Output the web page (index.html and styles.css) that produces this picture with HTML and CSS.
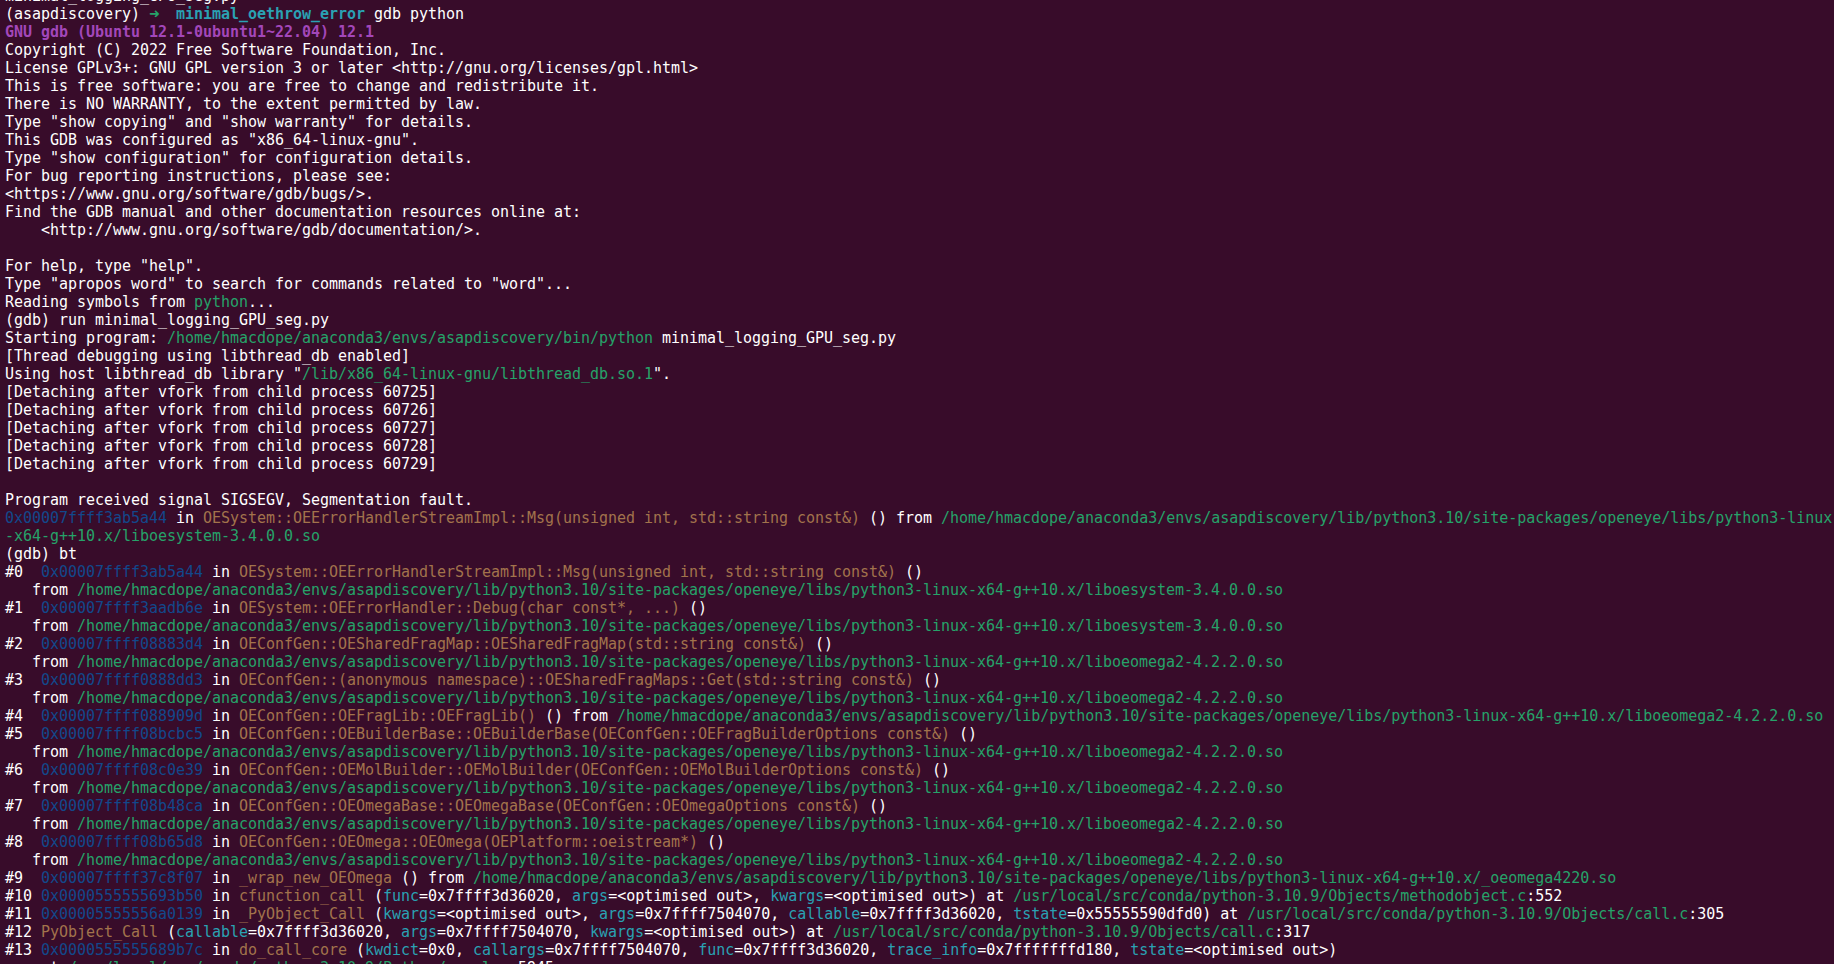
FILE: index.html
```html
<!DOCTYPE html>
<html>
<head>
<meta charset="utf-8">
<link rel="stylesheet" href="styles.css">
</head>
<body>
<pre class="term">minimal_logging_GPU_seg.py
(asapdiscovery) <span class="g bd arrow">➜</span>  <span class="c bd">minimal_oethrow_error</span> gdb python
<span class="m bd">GNU gdb (Ubuntu 12.1-0ubuntu1~22.04) 12.1</span>
Copyright (C) 2022 Free Software Foundation, Inc.
License GPLv3+: GNU GPL version 3 or later &lt;http://gnu.org/licenses/gpl.html&gt;
This is free software: you are free to change and redistribute it.
There is NO WARRANTY, to the extent permitted by law.
Type "show copying" and "show warranty" for details.
This GDB was configured as "x86_64-linux-gnu".
Type "show configuration" for configuration details.
For bug reporting instructions, please see:
&lt;https://www.gnu.org/software/gdb/bugs/&gt;.
Find the GDB manual and other documentation resources online at:
    &lt;http://www.gnu.org/software/gdb/documentation/&gt;.

For help, type "help".
Type "apropos word" to search for commands related to "word"...
Reading symbols from <span class="g">python</span>...
(gdb) run minimal_logging_GPU_seg.py
Starting program: <span class="g">/home/hmacdope/anaconda3/envs/asapdiscovery/bin/python</span> minimal_logging_GPU_seg.py
[Thread debugging using libthread_db enabled]
Using host libthread_db library "<span class="g">/lib/x86_64-linux-gnu/libthread_db.so.1</span>".
[Detaching after vfork from child process 60725]
[Detaching after vfork from child process 60726]
[Detaching after vfork from child process 60727]
[Detaching after vfork from child process 60728]
[Detaching after vfork from child process 60729]

Program received signal SIGSEGV, Segmentation fault.
<span class="b">0x00007ffff3ab5a44</span> in <span class="y">OESystem::OEErrorHandlerStreamImpl::Msg(unsigned int, std::string const&amp;)</span> () from <span class="g">/home/hmacdope/anaconda3/envs/asapdiscovery/lib/python3.10/site-packages/openeye/libs/python3-linux</span>
<span class="g">-x64-g++10.x/liboesystem-3.4.0.0.so</span>
(gdb) bt
#0  <span class="b">0x00007ffff3ab5a44</span> in <span class="y">OESystem::OEErrorHandlerStreamImpl::Msg(unsigned int, std::string const&amp;)</span> ()
   from <span class="g">/home/hmacdope/anaconda3/envs/asapdiscovery/lib/python3.10/site-packages/openeye/libs/python3-linux-x64-g++10.x/liboesystem-3.4.0.0.so</span>
#1  <span class="b">0x00007ffff3aadb6e</span> in <span class="y">OESystem::OEErrorHandler::Debug(char const*, ...)</span> ()
   from <span class="g">/home/hmacdope/anaconda3/envs/asapdiscovery/lib/python3.10/site-packages/openeye/libs/python3-linux-x64-g++10.x/liboesystem-3.4.0.0.so</span>
#2  <span class="b">0x00007ffff08883d4</span> in <span class="y">OEConfGen::OESharedFragMap::OESharedFragMap(std::string const&amp;)</span> ()
   from <span class="g">/home/hmacdope/anaconda3/envs/asapdiscovery/lib/python3.10/site-packages/openeye/libs/python3-linux-x64-g++10.x/liboeomega2-4.2.2.0.so</span>
#3  <span class="b">0x00007ffff0888dd3</span> in <span class="y">OEConfGen::(anonymous namespace)::OESharedFragMaps::Get(std::string const&amp;)</span> ()
   from <span class="g">/home/hmacdope/anaconda3/envs/asapdiscovery/lib/python3.10/site-packages/openeye/libs/python3-linux-x64-g++10.x/liboeomega2-4.2.2.0.so</span>
#4  <span class="b">0x00007ffff088909d</span> in <span class="y">OEConfGen::OEFragLib::OEFragLib()</span> () from <span class="g">/home/hmacdope/anaconda3/envs/asapdiscovery/lib/python3.10/site-packages/openeye/libs/python3-linux-x64-g++10.x/liboeomega2-4.2.2.0.so</span>
#5  <span class="b">0x00007ffff08bcbc5</span> in <span class="y">OEConfGen::OEBuilderBase::OEBuilderBase(OEConfGen::OEFragBuilderOptions const&amp;)</span> ()
   from <span class="g">/home/hmacdope/anaconda3/envs/asapdiscovery/lib/python3.10/site-packages/openeye/libs/python3-linux-x64-g++10.x/liboeomega2-4.2.2.0.so</span>
#6  <span class="b">0x00007ffff08c0e39</span> in <span class="y">OEConfGen::OEMolBuilder::OEMolBuilder(OEConfGen::OEMolBuilderOptions const&amp;)</span> ()
   from <span class="g">/home/hmacdope/anaconda3/envs/asapdiscovery/lib/python3.10/site-packages/openeye/libs/python3-linux-x64-g++10.x/liboeomega2-4.2.2.0.so</span>
#7  <span class="b">0x00007ffff08b48ca</span> in <span class="y">OEConfGen::OEOmegaBase::OEOmegaBase(OEConfGen::OEOmegaOptions const&amp;)</span> ()
   from <span class="g">/home/hmacdope/anaconda3/envs/asapdiscovery/lib/python3.10/site-packages/openeye/libs/python3-linux-x64-g++10.x/liboeomega2-4.2.2.0.so</span>
#8  <span class="b">0x00007ffff08b65d8</span> in <span class="y">OEConfGen::OEOmega::OEOmega(OEPlatform::oeistream*)</span> ()
   from <span class="g">/home/hmacdope/anaconda3/envs/asapdiscovery/lib/python3.10/site-packages/openeye/libs/python3-linux-x64-g++10.x/liboeomega2-4.2.2.0.so</span>
#9  <span class="b">0x00007ffff37c8f07</span> in <span class="y">_wrap_new_OEOmega</span> () from <span class="g">/home/hmacdope/anaconda3/envs/asapdiscovery/lib/python3.10/site-packages/openeye/libs/python3-linux-x64-g++10.x/_oeomega4220.so</span>
#10 <span class="b">0x0000555555693b50</span> in <span class="y">cfunction_call</span> (<span class="c">func</span>=0x7ffff3d36020, <span class="c">args</span>=&lt;optimised out&gt;, <span class="c">kwargs</span>=&lt;optimised out&gt;) at <span class="g">/usr/local/src/conda/python-3.10.9/Objects/methodobject.c</span>:552
#11 <span class="b">0x00005555556a0139</span> in <span class="y">_PyObject_Call</span> (<span class="c">kwargs</span>=&lt;optimised out&gt;, <span class="c">args</span>=0x7ffff7504070, <span class="c">callable</span>=0x7ffff3d36020, <span class="c">tstate</span>=0x55555590dfd0) at <span class="g">/usr/local/src/conda/python-3.10.9/Objects/call.c</span>:305
#12 <span class="y">PyObject_Call</span> (<span class="c">callable</span>=0x7ffff3d36020, <span class="c">args</span>=0x7ffff7504070, <span class="c">kwargs</span>=&lt;optimised out&gt;) at <span class="g">/usr/local/src/conda/python-3.10.9/Objects/call.c</span>:317
#13 <span class="b">0x0000555555689b7c</span> in <span class="y">do_call_core</span> (<span class="c">kwdict</span>=0x0, <span class="c">callargs</span>=0x7ffff7504070, <span class="c">func</span>=0x7ffff3d36020, <span class="c">trace_info</span>=0x7fffffffd180, <span class="c">tstate</span>=&lt;optimised out&gt;)
    at <span class="g">/usr/local/src/conda/python-3.10.9/Python/ceval.c</span>:5945</pre>
</body>
</html>
```
FILE: styles.css
```css
html, body {
  margin: 0;
  padding: 0;
  background: #380c2a;
  height: 100%;
  overflow: hidden;
}

.term {
  margin: -13px 0 0 0;
  padding: 0 0 0 5px;
  font-family: "DejaVu Sans Mono", "Liberation Mono", monospace;
  font-size: 15px;
  letter-spacing: -0.03px;
  line-height: 18px;
  color: #ffffff;
  white-space: pre;
}

.g { color: #26a269; }
.c { color: #2aa1b3; }
.m { color: #a347ba; }
.b { color: #12488b; }
.y { color: #a2734c; }
.bd { font-weight: bold; }

.arrow {
  display: inline-block;
  width: 9px;
  font-family: "DejaVu Sans", sans-serif;
  font-size: 13px;
  text-align: center;
  vertical-align: top;
}
```
